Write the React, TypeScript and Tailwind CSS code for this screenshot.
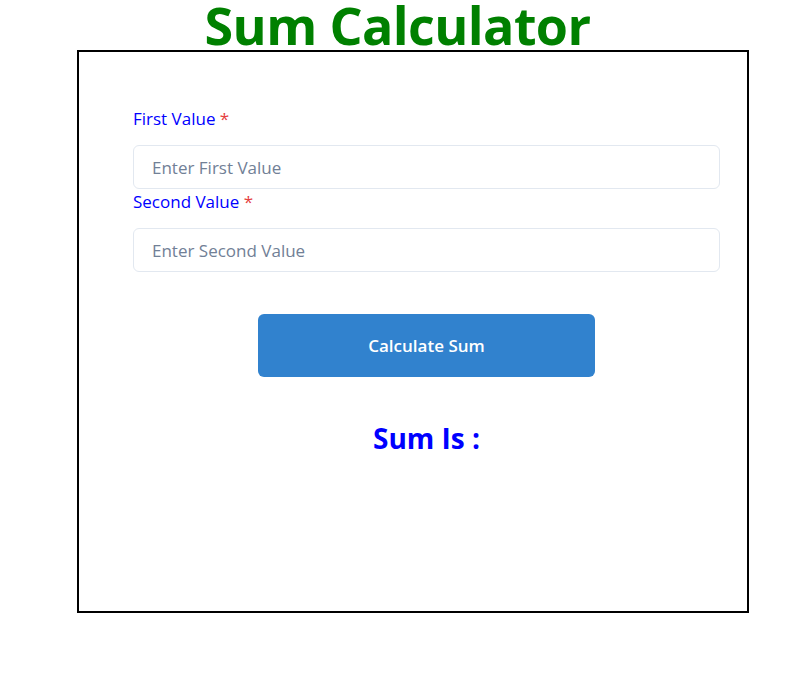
import { useState } from "react";

const font = { fontFamily: '"Open Sans", "Noto Sans", sans-serif' };

export default function App() {
  const [first, setFirst] = useState("");
  const [second, setSecond] = useState("");
  const [sum, setSum] = useState<number | null>(null);

  const calculate = () => {
    const a = parseFloat(first);
    const b = parseFloat(second);
    if (!isNaN(a) && !isNaN(b)) setSum(a + b);
  };

  return (
    <div className="min-h-[685px] bg-white pt-px" style={font}>
      {/* Title */}
      <h1 className="-mt-px h-[50px] text-center text-[52px] leading-[50px] font-bold text-[#008000] pr-[10px] tracking-[-0.6px]">
        Sum Calculator
      </h1>

      {/* Card */}
      <div className="ml-[77px] w-[672px] h-[563px] border-2 border-black pt-[55px] pl-[54px] pr-[27px]">
        <label className="block text-[17px] leading-[24px] text-[#0000ff] mb-[14px]">
          First Value <span className="text-[#e53e3e]">*</span>
        </label>
        <input
          value={first}
          onChange={(e) => setFirst(e.target.value)}
          placeholder="Enter First Value"
          className="block w-full h-[44px] rounded-md border border-[#e2e8f0] px-[18px] text-[17px] text-gray-800 placeholder:text-[#718096] outline-none"
        />
        <label className="block mt-px text-[17px] leading-[24px] text-[#0000ff] mb-[14px]">
          Second Value <span className="text-[#e53e3e]">*</span>
        </label>
        <input
          value={second}
          onChange={(e) => setSecond(e.target.value)}
          placeholder="Enter Second Value"
          className="block w-full h-[44px] rounded-md border border-[#e2e8f0] px-[18px] text-[17px] text-gray-800 placeholder:text-[#718096] outline-none"
        />

        <div className="flex justify-center mt-[42px]">
          <button
            onClick={calculate}
            className="w-[337px] h-[63px] rounded-md bg-[#3182ce] text-white text-[17px] font-semibold"
          >
            Calculate Sum
          </button>
        </div>

        <p className="mt-[43px] text-center text-[28px] leading-[36px] font-bold text-[#0000ff]">
          Sum Is : {sum !== null ? sum : ""}
        </p>
      </div>
    </div>
  );
}
